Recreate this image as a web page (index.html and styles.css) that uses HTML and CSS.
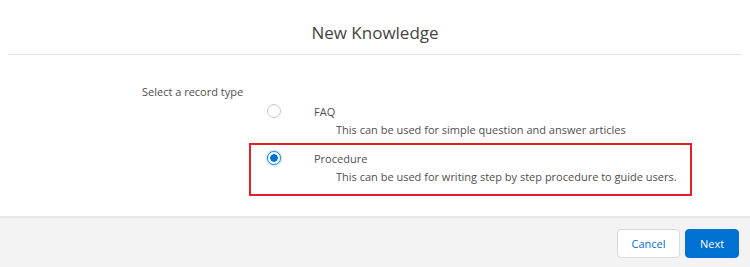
FILE: index.html
```html
<!DOCTYPE html>
<html lang="en">
<head>
    <meta charset="UTF-8">
    <meta name="viewport" content="width=device-width, initial-scale=1.0">
    <title>New Knowledge</title>
    <link rel="stylesheet" href="styles.css">
</head>
<body>
    <div class="modal">
        <div class="modal-header">
            <h2>New Knowledge</h2>
        </div>

        <div class="modal-body">
            <div class="field-label">Select a record type</div>
            <div class="radio-group">
                <label class="radio-option">
                    <span class="radio"></span>
                    <span class="option-text">
                        <span class="option-title">FAQ</span>
                        <span class="option-desc">This can be used for simple question and answer articles</span>
                    </span>
                </label>
                <label class="radio-option checked">
                    <span class="radio"></span>
                    <span class="option-text">
                        <span class="option-title">Procedure</span>
                        <span class="option-desc">This can be used for writing step by step procedure to guide users.</span>
                    </span>
                </label>
            </div>
        </div>

        <div class="modal-footer">
            <button class="btn cancel">Cancel</button>
            <button class="btn next">Next</button>
        </div>
    </div>
</body>
</html>
```

FILE: styles.css
```css
body {
    margin: 0;
    padding: 0;
    background: #fff;
    font-family: 'Open Sans', 'Noto Sans', sans-serif;
    color: #3e3e3c;
}

.modal {
    width: 750px;
    height: 267px;
    display: flex;
    flex-direction: column;
}

.modal-header {
    height: 55px;
    margin: 0 8px;
    box-sizing: border-box;
    padding-top: 21px;
    border-bottom: 1px solid #e5e5e5;
    text-align: center;
}

.modal-header h2 {
    margin: 0;
    font-size: 17px;
    font-weight: 400;
    line-height: 24px;
    color: #444;
}

.modal-body {
    height: 161px;
    box-sizing: border-box;
    padding-top: 28px;
}

.field-label {
    padding-left: 142px;
    font-size: 11px;
    line-height: 18px;
    color: #514f4d;
}

.radio-group {
    margin-top: 2px;
    margin-left: 249px;
    display: flex;
    flex-direction: column;
    gap: 11px;
}

.radio-option {
    position: relative;
    display: flex;
    height: 36px;
    padding-left: 18px;
    font-size: 11px;
    line-height: 18px;
    color: #514f4d;
}

.radio {
    width: 14px;
    height: 14px;
    margin-top: 1px;
    box-sizing: border-box;
    border: 1px solid #c9c7c5;
    border-radius: 50%;
    background: #fff;
}

.checked .radio {
    border: 1px solid #1589ee;
    box-shadow: 0 0 2px #1589ee;
    background: radial-gradient(circle, #0070d2 0 3.5px, #fff 4px);
}

/* annotation box around the chosen option */
.checked::after {
    content: '';
    position: absolute;
    left: 0;
    top: -7px;
    width: 443px;
    height: 53px;
    box-sizing: border-box;
    border: 2px solid #e41e2b;
}

.option-text {
    display: flex;
    flex-direction: column;
    margin-left: 33px;
}

.option-desc {
    padding-left: 22px;
}

.modal-footer {
    flex: 1;
    display: flex;
    justify-content: flex-end;
    align-items: flex-start;
    gap: 5px;
    padding: 11px 11px 0 0;
    background: #f3f3f3;
    border-top: 2px solid #e8e8e8;
}

.btn {
    height: 29px;
    padding: 0;
    border-radius: 4px;
    font-family: inherit;
    font-size: 11px;
    cursor: pointer;
}

.cancel {
    width: 63px;
    background: #fff;
    color: #0070d2;
    border: 1px solid #dddbda;
}

.next {
    width: 54px;
    background: #0070d2;
    color: #fff;
    border: 1px solid #0070d2;
}
```
